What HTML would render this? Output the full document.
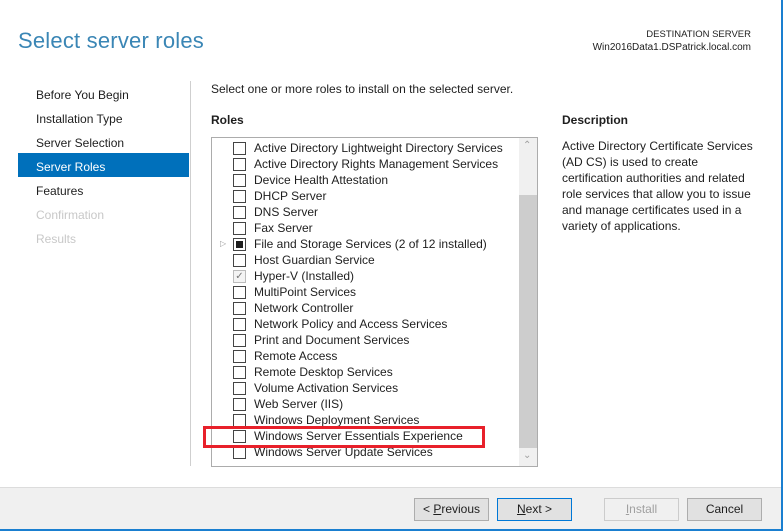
<!DOCTYPE html>
<html><head><style>
*{margin:0;padding:0;box-sizing:border-box}
body{width:783px;height:531px;background:#fff;font-family:"Liberation Sans",sans-serif;font-size:12px;color:#1e1e1e;position:relative;overflow:hidden}
.a{position:absolute;white-space:nowrap}
.title{left:18px;top:28px;font-size:22px;color:#3a86b5;letter-spacing:0.2px}
.nav{left:36px;font-size:12px;line-height:24px}
.row{position:absolute;left:0;height:16px;line-height:16px}
.cb{position:absolute;left:21px;top:2px;width:13px;height:13px;border:1px solid #444;background:#fff}
.tx{position:absolute;left:42px;top:0;white-space:nowrap;font-size:12px}
.btn{position:absolute;top:498px;height:23px;border:1px solid #adadad;background:#e1e1e1;text-align:center;line-height:21px;font-size:12px}
</style></head><body>
<div class="a title">Select server roles</div>
<div class="a" style="right:32px;top:28px;font-size:9.5px;text-align:right;line-height:13px">DESTINATION SERVER<br><span style="font-size:10px">Win2016Data1.DSPatrick.local.com</span></div>

<div class="a" style="left:18px;top:153px;width:171px;height:24px;background:#0070bb"></div>
<div class="a nav" style="top:83px">Before You Begin</div>
<div class="a nav" style="top:107px">Installation Type</div>
<div class="a nav" style="top:131px">Server Selection</div>
<div class="a nav" style="top:155px;color:#fff">Server Roles</div>
<div class="a nav" style="top:179px">Features</div>
<div class="a nav" style="top:203px;color:#c8c8c8">Confirmation</div>
<div class="a nav" style="top:227px;color:#c8c8c8">Results</div>
<div class="a" style="left:190px;top:81px;width:1px;height:385px;background:#cfcfcf"></div>

<div class="a" style="left:211px;top:82px">Select one or more roles to install on the selected server.</div>
<div class="a" style="left:211px;top:113px;font-weight:bold">Roles</div>
<div class="a" style="left:562px;top:113px;font-weight:bold">Description</div>
<div class="a" style="left:562px;top:138px;line-height:16px;white-space:normal;width:200px">Active Directory Certificate Services (AD CS) is used to create certification authorities and related role services that allow you to issue and manage certificates used in a variety of applications.</div>

<div class="a" style="left:211px;top:137px;width:327px;height:330px;border:1px solid #acacac;overflow:hidden">
 <div style="position:absolute;left:307px;top:0;width:18px;height:328px;background:#f0f0f0"></div>
 <div style="position:absolute;left:307px;top:57px;width:18px;height:253px;background:#cdcdcd"></div>
 <div style="position:absolute;left:311px;top:2px;color:#a0a0a0;font-size:10px">&#8963;</div>
 <div style="position:absolute;left:311px;top:312px;color:#a0a0a0;font-size:10px">&#8964;</div>
 <div class="row" style="top:2px"><div class="cb"></div><div class="tx">Active Directory Lightweight Directory Services</div></div>
 <div class="row" style="top:18px"><div class="cb"></div><div class="tx">Active Directory Rights Management Services</div></div>
 <div class="row" style="top:34px"><div class="cb"></div><div class="tx">Device Health Attestation</div></div>
 <div class="row" style="top:50px"><div class="cb"></div><div class="tx">DHCP Server</div></div>
 <div class="row" style="top:66px"><div class="cb"></div><div class="tx">DNS Server</div></div>
 <div class="row" style="top:82px"><div class="cb"></div><div class="tx">Fax Server</div></div>
 <div class="row" style="top:98px;width:300px"><div style="position:absolute;left:8px;top:0;color:#999;font-size:8px">&#9655;</div><div class="cb"><div style="margin:2px;width:7px;height:7px;background:#1e1e1e"></div></div><div class="tx">File and Storage Services (2 of 12 installed)</div></div>
 <div class="row" style="top:114px"><div class="cb"></div><div class="tx">Host Guardian Service</div></div>
 <div class="row" style="top:130px"><div class="cb" style="border-color:#bbb;background:#f4f4f4;color:#777;font-size:10px;line-height:11px;text-align:center">&#10003;</div><div class="tx">Hyper-V (Installed)</div></div>
 <div class="row" style="top:146px"><div class="cb"></div><div class="tx">MultiPoint Services</div></div>
 <div class="row" style="top:162px"><div class="cb"></div><div class="tx">Network Controller</div></div>
 <div class="row" style="top:178px"><div class="cb"></div><div class="tx">Network Policy and Access Services</div></div>
 <div class="row" style="top:194px"><div class="cb"></div><div class="tx">Print and Document Services</div></div>
 <div class="row" style="top:210px"><div class="cb"></div><div class="tx">Remote Access</div></div>
 <div class="row" style="top:226px"><div class="cb"></div><div class="tx">Remote Desktop Services</div></div>
 <div class="row" style="top:242px"><div class="cb"></div><div class="tx">Volume Activation Services</div></div>
 <div class="row" style="top:258px"><div class="cb"></div><div class="tx">Web Server (IIS)</div></div>
 <div class="row" style="top:274px"><div class="cb"></div><div class="tx">Windows Deployment Services</div></div>
 <div class="row" style="top:290px"><div class="cb"></div><div class="tx">Windows Server Essentials Experience</div></div>
 <div class="row" style="top:306px"><div class="cb"></div><div class="tx">Windows Server Update Services</div></div>
</div>
<div class="a" style="left:203px;top:426px;width:282px;height:22px;border:3px solid #e8202a"></div>

<div class="a" style="left:0;top:487px;width:783px;height:44px;background:#f0f0f0;border-top:1px solid #dcdcdc"></div>
<div class="btn" style="left:414px;width:75px">&lt; <u>P</u>revious</div>
<div class="btn" style="left:497px;width:75px;border-color:#0078d7"><u>N</u>ext &gt;</div>
<div class="btn" style="left:604px;width:75px;background:#f0f0f0;border-color:#ccc;color:#a0a0a0"><u>I</u>nstall</div>
<div class="btn" style="left:687px;width:75px">Cancel</div>
<div class="a" style="left:781px;top:0;width:2px;height:531px;background:#1a7fd0"></div>
<div class="a" style="left:0;top:529px;width:783px;height:2px;background:#1a7fd0"></div>
</body></html>
